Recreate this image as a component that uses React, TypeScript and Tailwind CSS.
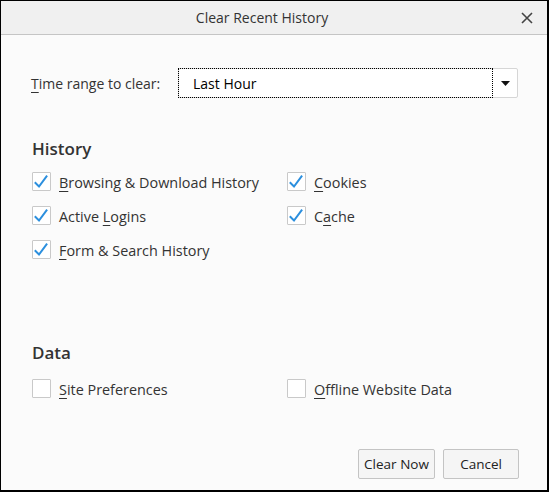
import React from "react";

const font = { fontFamily: '"Open Sans", "Noto Sans", sans-serif' };

function Check() {
  return (
    <svg width="19" height="19" viewBox="0 0 19 19" className="block">
      <path d="M3.5 11 L7 14.5 L14.5 4.5" fill="none" stroke="#2b8fde" strokeWidth="2" strokeLinecap="square" />
    </svg>
  );
}

function Box({ checked, label }: { checked: boolean; label: React.ReactNode }) {
  return (
    <div className="flex items-start h-[34px]">
      <div className="w-[19px] h-[19px] border border-[#c9c9c9] bg-white rounded-[1px] box-border shrink-0 relative">
        {checked && (
          <div className="absolute -left-px -top-px">
            <Check />
          </div>
        )}
      </div>
      <span className="ml-[8px] mt-[1px] text-[14.4px] leading-[19px] text-[#333] whitespace-nowrap">{label}</span>
    </div>
  );
}

const U = ({ children }: { children: React.ReactNode }) => <span className="underline underline-offset-[3px]">{children}</span>;

export default function App() {
  return (
    <div
      className="w-[549px] h-[492px] box-border border-l border-t border-r-2 border-b-2 border-black bg-[#fbfbfb] flex flex-col"
      style={font}
    >
      <div className="h-[34px] box-border border-b border-[#c5c5c5] bg-[#f0f0f0] flex items-center shrink-0">
        <div className="flex-1 text-center text-[14px] text-[#333] pl-[2px]">Clear Recent History</div>
        <div className="w-[26px] h-full flex items-center justify-start">
          <svg width="12" height="12" viewBox="0 0 12 12">
            <path d="M1 1 L11 11 M11 1 L1 11" stroke="#444" strokeWidth="1.6" />
          </svg>
        </div>
      </div>

      <div className="flex-1 flex flex-col pl-[30px] pr-[28px]">
        <div className="mt-[33px] h-[30px] flex items-center">
          <span className="w-[147px] text-[14px] text-[#333] whitespace-nowrap">
            <U>T</U>ime range to clear:
          </span>
          <div className="flex h-[30px] w-[340px] box-border border border-[#d6d6d6] rounded-[2px] bg-white">
            <div className="w-[315px] -my-px -ml-px h-[30px] box-border border border-dotted border-black flex items-center pl-[14px] text-[14px] text-black">
              Last Hour
            </div>
            <div className="flex-1 flex items-center justify-center">
              <svg width="9" height="5" viewBox="0 0 9 5">
                <path d="M0 0 L9 0 L4.5 5 Z" fill="#111" />
              </svg>
            </div>
          </div>
        </div>

        <div className="mt-[39px] h-[24px] leading-[24px] text-[17px] font-semibold text-[#333] pl-[1px]">History</div>
        <div className="mt-[11px] pl-[1px] grid grid-cols-[255px_1fr]">
          <Box checked label={<><U>B</U>rowsing &amp; Download History</>} />
          <Box checked label={<><U>C</U>ookies</>} />
          <Box checked label={<>Active <U>L</U>ogins</>} />
          <Box checked label={<>C<U>a</U>che</>} />
          <Box checked label={<><U>F</U>orm &amp; Search History</>} />
        </div>

        <div className="mt-[67px] h-[24px] leading-[24px] text-[17px] font-semibold text-[#333] pl-[1px]">Data</div>
        <div className="mt-[14px] pl-[1px] grid grid-cols-[255px_1fr]">
          <Box checked={false} label={<><U>S</U>ite Preferences</>} />
          <Box checked={false} label={<><U>O</U>ffline Website Data</>} />
        </div>

        <div className="mt-auto mb-[11px] flex justify-end gap-[8px]">
          <button className="w-[77px] h-[30px] box-border border border-[#c4c4c4] rounded-[2px] bg-[#f5f5f5] text-[13.5px] text-[#222]">
            Clear Now
          </button>
          <button className="w-[76px] h-[30px] box-border border border-[#c4c4c4] rounded-[2px] bg-[#f5f5f5] text-[13.5px] text-[#222]">
            Cancel
          </button>
        </div>
      </div>
    </div>
  );
}
